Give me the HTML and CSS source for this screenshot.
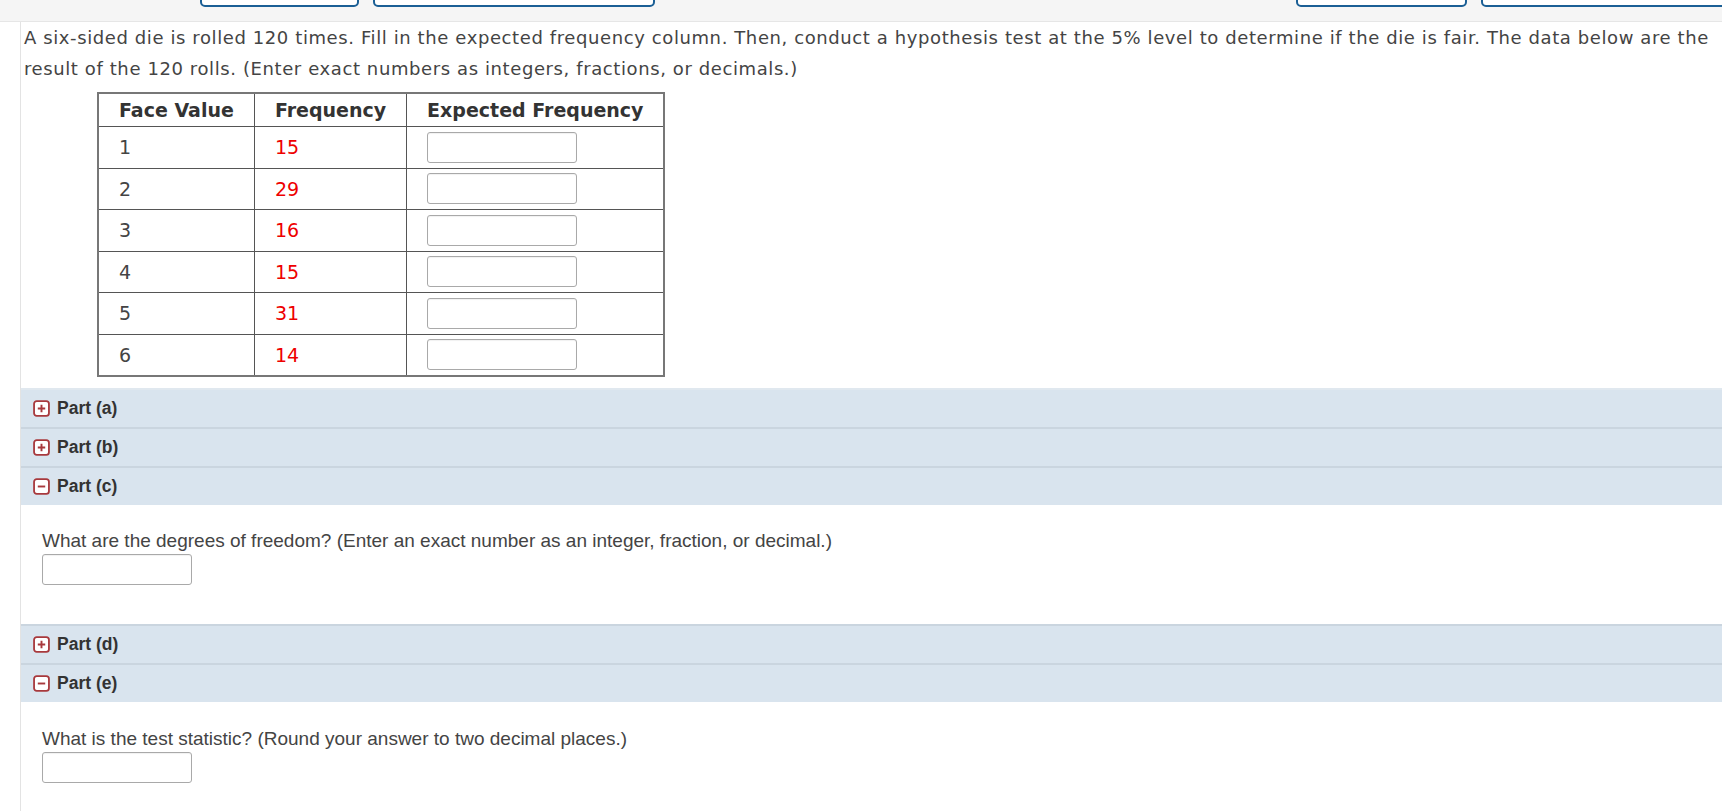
FILE: index.html
```html
<!DOCTYPE html>
<html lang="en">
<head>
    <meta charset="UTF-8">
    <title>Chi-square goodness of fit</title>
    <link rel="stylesheet" href="styles.css">
</head>
<body>
    <div class="topbar">
        <div class="tab-group">
            <span class="tab-btn tab-short"></span>
            <span class="tab-btn tab-long"></span>
        </div>
        <div class="tab-group tab-group-right">
            <span class="tab-btn tab-mid"></span>
            <span class="tab-btn tab-wide"></span>
        </div>
    </div>

    <div class="page">
        <p class="stem">A six-sided die is rolled 120 times. Fill in the expected frequency column. Then, conduct a hypothesis test at the 5% level to determine if the die is fair. The data below are the result of the 120 rolls. (Enter exact numbers as integers, fractions, or decimals.)</p>

        <table class="freq-table">
            <thead>
                <tr>
                    <th>Face Value</th>
                    <th>Frequency</th>
                    <th>Expected Frequency</th>
                </tr>
            </thead>
            <tbody>
                <tr><td>1</td><td class="given">15</td><td><input type="text" class="answer"></td></tr>
                <tr><td>2</td><td class="given">29</td><td><input type="text" class="answer"></td></tr>
                <tr><td>3</td><td class="given">16</td><td><input type="text" class="answer"></td></tr>
                <tr><td>4</td><td class="given">15</td><td><input type="text" class="answer"></td></tr>
                <tr><td>5</td><td class="given">31</td><td><input type="text" class="answer"></td></tr>
                <tr><td>6</td><td class="given">14</td><td><input type="text" class="answer"></td></tr>
            </tbody>
        </table>

        <div class="parts">
            <div class="part-head">
                <svg class="toggle" viewBox="0 0 16 16"><rect x="1" y="1" width="14" height="14" rx="2.5"/><path d="M4.5 8h7M8 4.5v7"/></svg>
                <span>Part (a)</span>
            </div>
            <div class="part-head">
                <svg class="toggle" viewBox="0 0 16 16"><rect x="1" y="1" width="14" height="14" rx="2.5"/><path d="M4.5 8h7M8 4.5v7"/></svg>
                <span>Part (b)</span>
            </div>
            <div class="part-head">
                <svg class="toggle" viewBox="0 0 16 16"><rect x="1" y="1" width="14" height="14" rx="2.5"/><path d="M4.5 8h7"/></svg>
                <span>Part (c)</span>
            </div>
            <div class="part-body">
                <p class="prompt">What are the degrees of freedom? (Enter an exact number as an integer, fraction, or decimal.)</p>
                <input type="text" class="answer">
            </div>
            <div class="part-head">
                <svg class="toggle" viewBox="0 0 16 16"><rect x="1" y="1" width="14" height="14" rx="2.5"/><path d="M4.5 8h7M8 4.5v7"/></svg>
                <span>Part (d)</span>
            </div>
            <div class="part-head">
                <svg class="toggle" viewBox="0 0 16 16"><rect x="1" y="1" width="14" height="14" rx="2.5"/><path d="M4.5 8h7"/></svg>
                <span>Part (e)</span>
            </div>
            <div class="part-body part-body-last">
                <p class="prompt">What is the test statistic? (Round your answer to two decimal places.)</p>
                <input type="text" class="answer">
            </div>
        </div>
    </div>
</body>
</html>
```

FILE: styles.css
```css
:root {
    --text: #444;
    --text-dark: #333;
    --part-bg: #d9e4ee;
    --part-line: #cad5df;
    --toggle: #a8393d;
    --tab-border: #1b5f95;
}

body {
    margin: 0;
    background: white;
    color: var(--text);
    overflow: hidden;
}

.topbar {
    height: 21px;
    background: #f5f5f5;
    border-bottom: 1px solid #e6e6e6;
    display: flex;
    padding-left: 200px;
    overflow: hidden;
}

.tab-group {
    display: flex;
    gap: 14px;
}

.tab-group-right {
    margin-left: auto;
    margin-right: -40px;
}

.tab-btn {
    display: block;
    height: 40px;
    margin-top: -33px;
    background: white;
    border: 2px solid var(--tab-border);
    border-radius: 5px;
    box-sizing: border-box;
}

.tab-short { width: 159px; }
.tab-long { width: 282px; }
.tab-mid { width: 171px; }
.tab-wide { width: 281px; }

.page {
    margin-left: 20px;
    border-left: 1px solid #e3e3e3;
    min-height: 800px;
}

.stem {
    margin: 0;
    padding: 0 4px 0 3px;
    font-family: "DejaVu Sans", Verdana, sans-serif;
    font-size: 18px;
    letter-spacing: 0.6px;
    line-height: 31px;
}

.freq-table {
    margin: 8px 0 0 76px;
    border-collapse: collapse;
    border: 2px solid #777;
    font-family: "DejaVu Sans", Verdana, sans-serif;
    font-size: 19px;
}

.freq-table th,
.freq-table td {
    border: 1px solid #555;
    padding: 0 20px;
    text-align: left;
}

.freq-table th {
    height: 32px;
    color: var(--text-dark);
    font-weight: bold;
}

.freq-table td {
    height: 40.5px;
}

.freq-table td.given {
    color: #e00;
}

.answer {
    display: block;
    width: 150px;
    height: 31px;
    box-sizing: border-box;
    border: 1px solid #a9a9a9;
    border-radius: 3px;
    box-shadow: inset 0 1px 1px rgba(0,0,0,0.06);
    background: white;
    margin: 0;
}

.parts {
    margin-top: 11px;
    font-family: "Liberation Sans", Arial, sans-serif;
}

.part-head {
    display: flex;
    align-items: center;
    gap: 7px;
    height: 37px;
    padding-left: 12px;
    background: var(--part-bg);
    border-top: 2px solid var(--part-line);
    font-size: 17.5px;
    font-weight: bold;
    color: var(--text-dark);
}

.part-head:first-child {
    border-top-color: #e0e8ef;
}

.toggle {
    width: 17px;
    height: 17px;
    flex-shrink: 0;
}

.toggle rect {
    fill: white;
    stroke: var(--toggle);
    stroke-width: 1.7;
}

.toggle path {
    stroke: var(--toggle);
    stroke-width: 1.8;
    fill: none;
}

.part-body {
    padding: 25px 0 39px 21px;
}

.part-body-last {
    padding-top: 26px;
}

.prompt {
    margin: 0 0 2px;
    font-size: 19px;
    line-height: 22px;
    color: var(--text);
}
```
